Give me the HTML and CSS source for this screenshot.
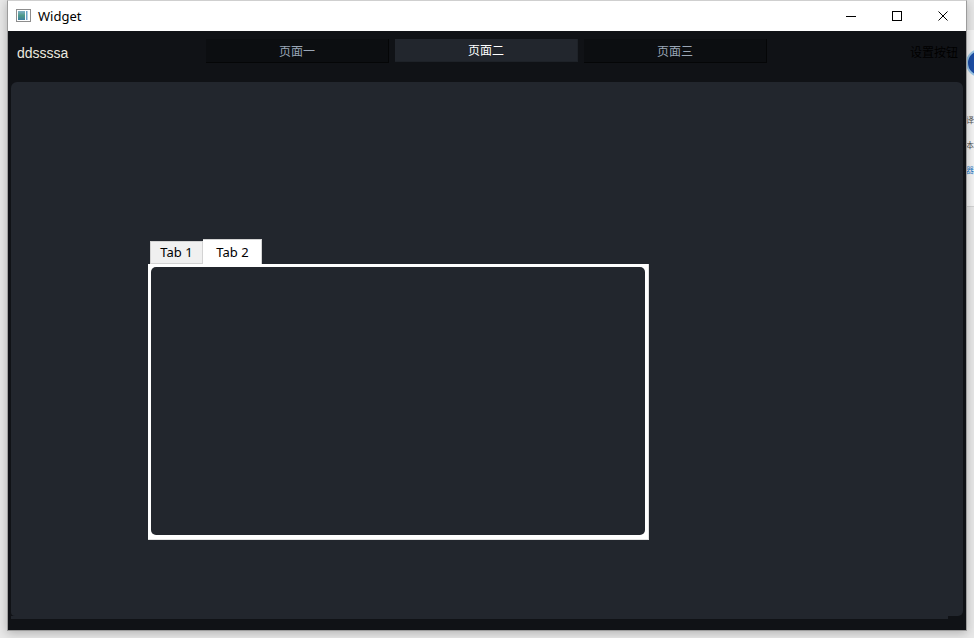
FILE: index.html
```html
<!DOCTYPE html>
<html lang="zh-CN">
<head>
    <meta charset="UTF-8">
    <meta name="viewport" content="width=device-width, initial-scale=1.0">
    <title>Widget</title>
    <link rel="stylesheet" href="styles.css">
</head>
<body>
    <div class="desktop">
        <div class="side-app">
            <div class="side-icon"></div>
            <div class="side-lines">
                <div>译</div>
                <div>本</div>
                <div class="side-link">器</div>
            </div>
        </div>
    </div>

    <div class="window">
        <div class="titlebar">
            <svg class="app-icon" width="15" height="13" viewBox="0 0 15 13">
                <defs>
                    <linearGradient id="ig" x1="0" y1="0" x2="0" y2="1">
                        <stop offset="0" stop-color="#7fb0c8"/>
                        <stop offset="0.5" stop-color="#4f9a8a"/>
                        <stop offset="1" stop-color="#3d7fa0"/>
                    </linearGradient>
                </defs>
                <rect x="0.5" y="0.5" width="14" height="12" fill="#fff" stroke="#8d8d8d"/>
                <rect x="2" y="2" width="7" height="9" fill="url(#ig)"/>
                <rect x="10" y="2" width="1.5" height="9" fill="#6aa0c8"/>
            </svg>
            <span class="title">Widget</span>
            <div class="controls">
                <span class="ctl">
                    <svg width="10" height="10" viewBox="0 0 10 10"><path d="M0 5.5h10" stroke="#000" stroke-width="1"/></svg>
                </span>
                <span class="ctl">
                    <svg width="10" height="10" viewBox="0 0 10 10"><rect x="0.5" y="0.5" width="9" height="9" fill="none" stroke="#000"/></svg>
                </span>
                <span class="ctl">
                    <svg width="10" height="10" viewBox="0 0 10 10"><path d="M0.5 0.5l9 9M9.5 0.5l-9 9" stroke="#000" stroke-width="1"/></svg>
                </span>
            </div>
        </div>

        <div class="client">
            <div class="header">
                <div class="brand">ddssssa</div>
                <div class="nav">
                    <button class="nav-btn">页面一</button>
                    <button class="nav-btn active">页面二</button>
                    <button class="nav-btn">页面三</button>
                </div>
                <div class="settings">设置按钮</div>
            </div>

            <div class="panel">
                <div class="tabs">
                    <div class="tab-bar">
                        <div class="tab">Tab 1</div>
                        <div class="tab current">Tab 2</div>
                    </div>
                    <div class="tab-pane">
                        <div class="tab-body"></div>
                    </div>
                </div>
            </div>
        </div>
    </div>
</body>
</html>
```

FILE: styles.css
```css
body {
    margin: 0;
    width: 974px;
    height: 638px;
    overflow: hidden;
    position: relative;
    background-color: #e9e9e9;
    font-family: "Noto Sans", "Liberation Sans", sans-serif;
}
.desktop {
    position: absolute;
    left: 0;
    top: 0;
    width: 974px;
    height: 638px;
}
.side-app {
    position: absolute;
    left: 940px;
    top: 30px;
    width: 34px;
    height: 176px;
    background-color: #f6f6f6;
    border-bottom: 1px solid #d4d4d4;
}
.side-icon {
    position: absolute;
    left: 26px;
    top: 19px;
    width: 24px;
    height: 24px;
    border-radius: 50%;
    background-color: #1d4ea6;
    border: 2px solid #9cc7e8;
}
.side-lines {
    position: absolute;
    left: 26px;
    top: 77px;
    font-family: "Noto Sans CJK SC", sans-serif;
    font-size: 8px;
    line-height: 25px;
    color: #555;
}
.side-link {
    color: #2f7fc8;
}
.window {
    position: absolute;
    left: 7px;
    top: 0;
    width: 958px;
    height: 629px;
    border: 1px solid #9c9c9c;
    border-top-color: #cfcfcf;
    box-shadow: 0 2px 10px rgba(0,0,0,0.25);
    display: flex;
    flex-direction: column;
}
.titlebar {
    height: 30px;
    background-color: #fff;
    display: flex;
    align-items: center;
    padding-left: 8px;
}
.app-icon {
    display: block;
    margin-top: -1px;
}
.title {
    margin-left: 7px;
    font-size: 13px;
    color: #000;
    margin-top: -1px;
}
.controls {
    margin-left: auto;
    display: flex;
    height: 30px;
}
.ctl {
    width: 46px;
    display: flex;
    align-items: center;
    justify-content: center;
}
.ctl svg {
    display: block;
    margin-top: -1px;
}
.client {
    flex: 1;
    background-color: #101216;
    display: flex;
    flex-direction: column;
}
.header {
    height: 43px;
    padding: 8px 8px 0 9px;
    display: flex;
    align-items: flex-start;
}
.brand {
    width: 189px;
    font-family: "Liberation Sans", sans-serif;
    font-size: 14px;
    line-height: 24px;
    padding-top: 2px;
    color: #ebe7df;
}
.nav {
    display: flex;
    gap: 6px;
}
.nav-btn {
    width: 183px;
    height: 24px;
    margin: 0;
    padding: 0;
    border: none;
    border-right: 1px solid #050607;
    border-bottom: 1px solid #050607;
    background-color: #0c0e11;
    color: #9aa6b6;
    font-family: "Noto Sans CJK SC", sans-serif;
    font-size: 12px;
    line-height: 22px;
    cursor: pointer;
}
.nav-btn.active {
    background-color: #22262d;
    border-color: #1e2228;
    color: #fff;
    height: 23px;
}
.settings {
    margin-left: auto;
    font-family: "Noto Sans CJK SC", sans-serif;
    font-size: 12px;
    line-height: 24px;
    padding-top: 1px;
    color: #000;
}
.panel {
    position: relative;
    height: 377px;
    margin: 0 3px 14px 3px;
    padding: 157px 0 0 137px;
    background-color: #22262d;
    border-radius: 6px 6px 5px 4px;
}
.panel::after {
    content: "";
    position: absolute;
    left: 0;
    right: 15px;
    bottom: -3px;
    height: 3px;
    background-color: #22262d;
}
.tabs {
    width: 501px;
}
.tab-bar {
    height: 25px;
    display: flex;
    align-items: flex-end;
    padding-left: 2px;
}
.tab {
    width: 51px;
    height: 21px;
    border: 1px solid #d3d3d3;
    background-color: #f0f0f0;
    font-family: "Noto Sans", sans-serif;
    font-size: 13px;
    line-height: 21px;
    text-align: center;
    color: #000;
}
.tab.current {
    width: 57px;
    height: 24px;
    padding-left: 1px;
    border-left: none;
    border-bottom: none;
    background-color: #fff;
    line-height: 24px;
}
.tab-pane {
    height: 268px;
    padding: 3px 3px 4px 3px;
    background-color: #fff;
    border-right: 1px solid #e2e2e2;
    border-bottom: 1px solid #e2e2e2;
    box-sizing: content-box;
    width: 494px;
}
.tab-body {
    height: 100%;
    background-color: #22262d;
    border-radius: 5px;
}
```
